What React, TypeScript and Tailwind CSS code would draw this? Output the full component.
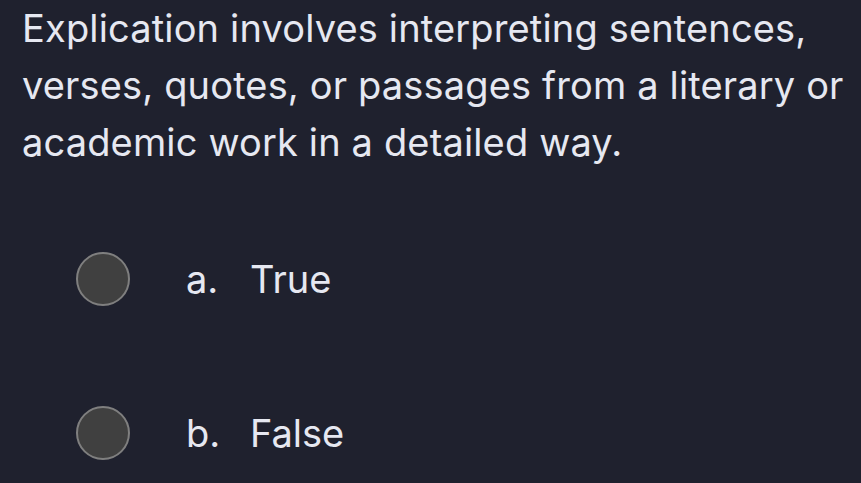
export default function App() {
  const options = [
    { key: "a.", label: "True" },
    { key: "b.", label: "False" },
  ];

  return (
    <div className="w-[861px] h-[483px] overflow-hidden bg-[#1f212e] text-[#e6e8f1] font-['Inter',sans-serif]">
      <p className="pl-[22px] pr-[4px] text-[38px] leading-[57px] tracking-[0.15px]">
        Explication involves interpreting sentences, verses, quotes, or passages from a literary or
        academic work in a detailed way.
      </p>
      <ul className="mt-[81px] ml-[76px] flex flex-col gap-[100px]">
        {options.map((o) => (
          <li key={o.key} className="flex items-center h-[54px]">
            <span className="w-[54px] h-[54px] shrink-0 rounded-full border-2 border-[#7f7f7f] bg-[#404040]" />
            <span className="ml-[56px] w-[64px] text-[38px] leading-[57px]">{o.key}</span>
            <span className="text-[38px] leading-[57px]">{o.label}</span>
          </li>
        ))}
      </ul>
    </div>
  );
}
